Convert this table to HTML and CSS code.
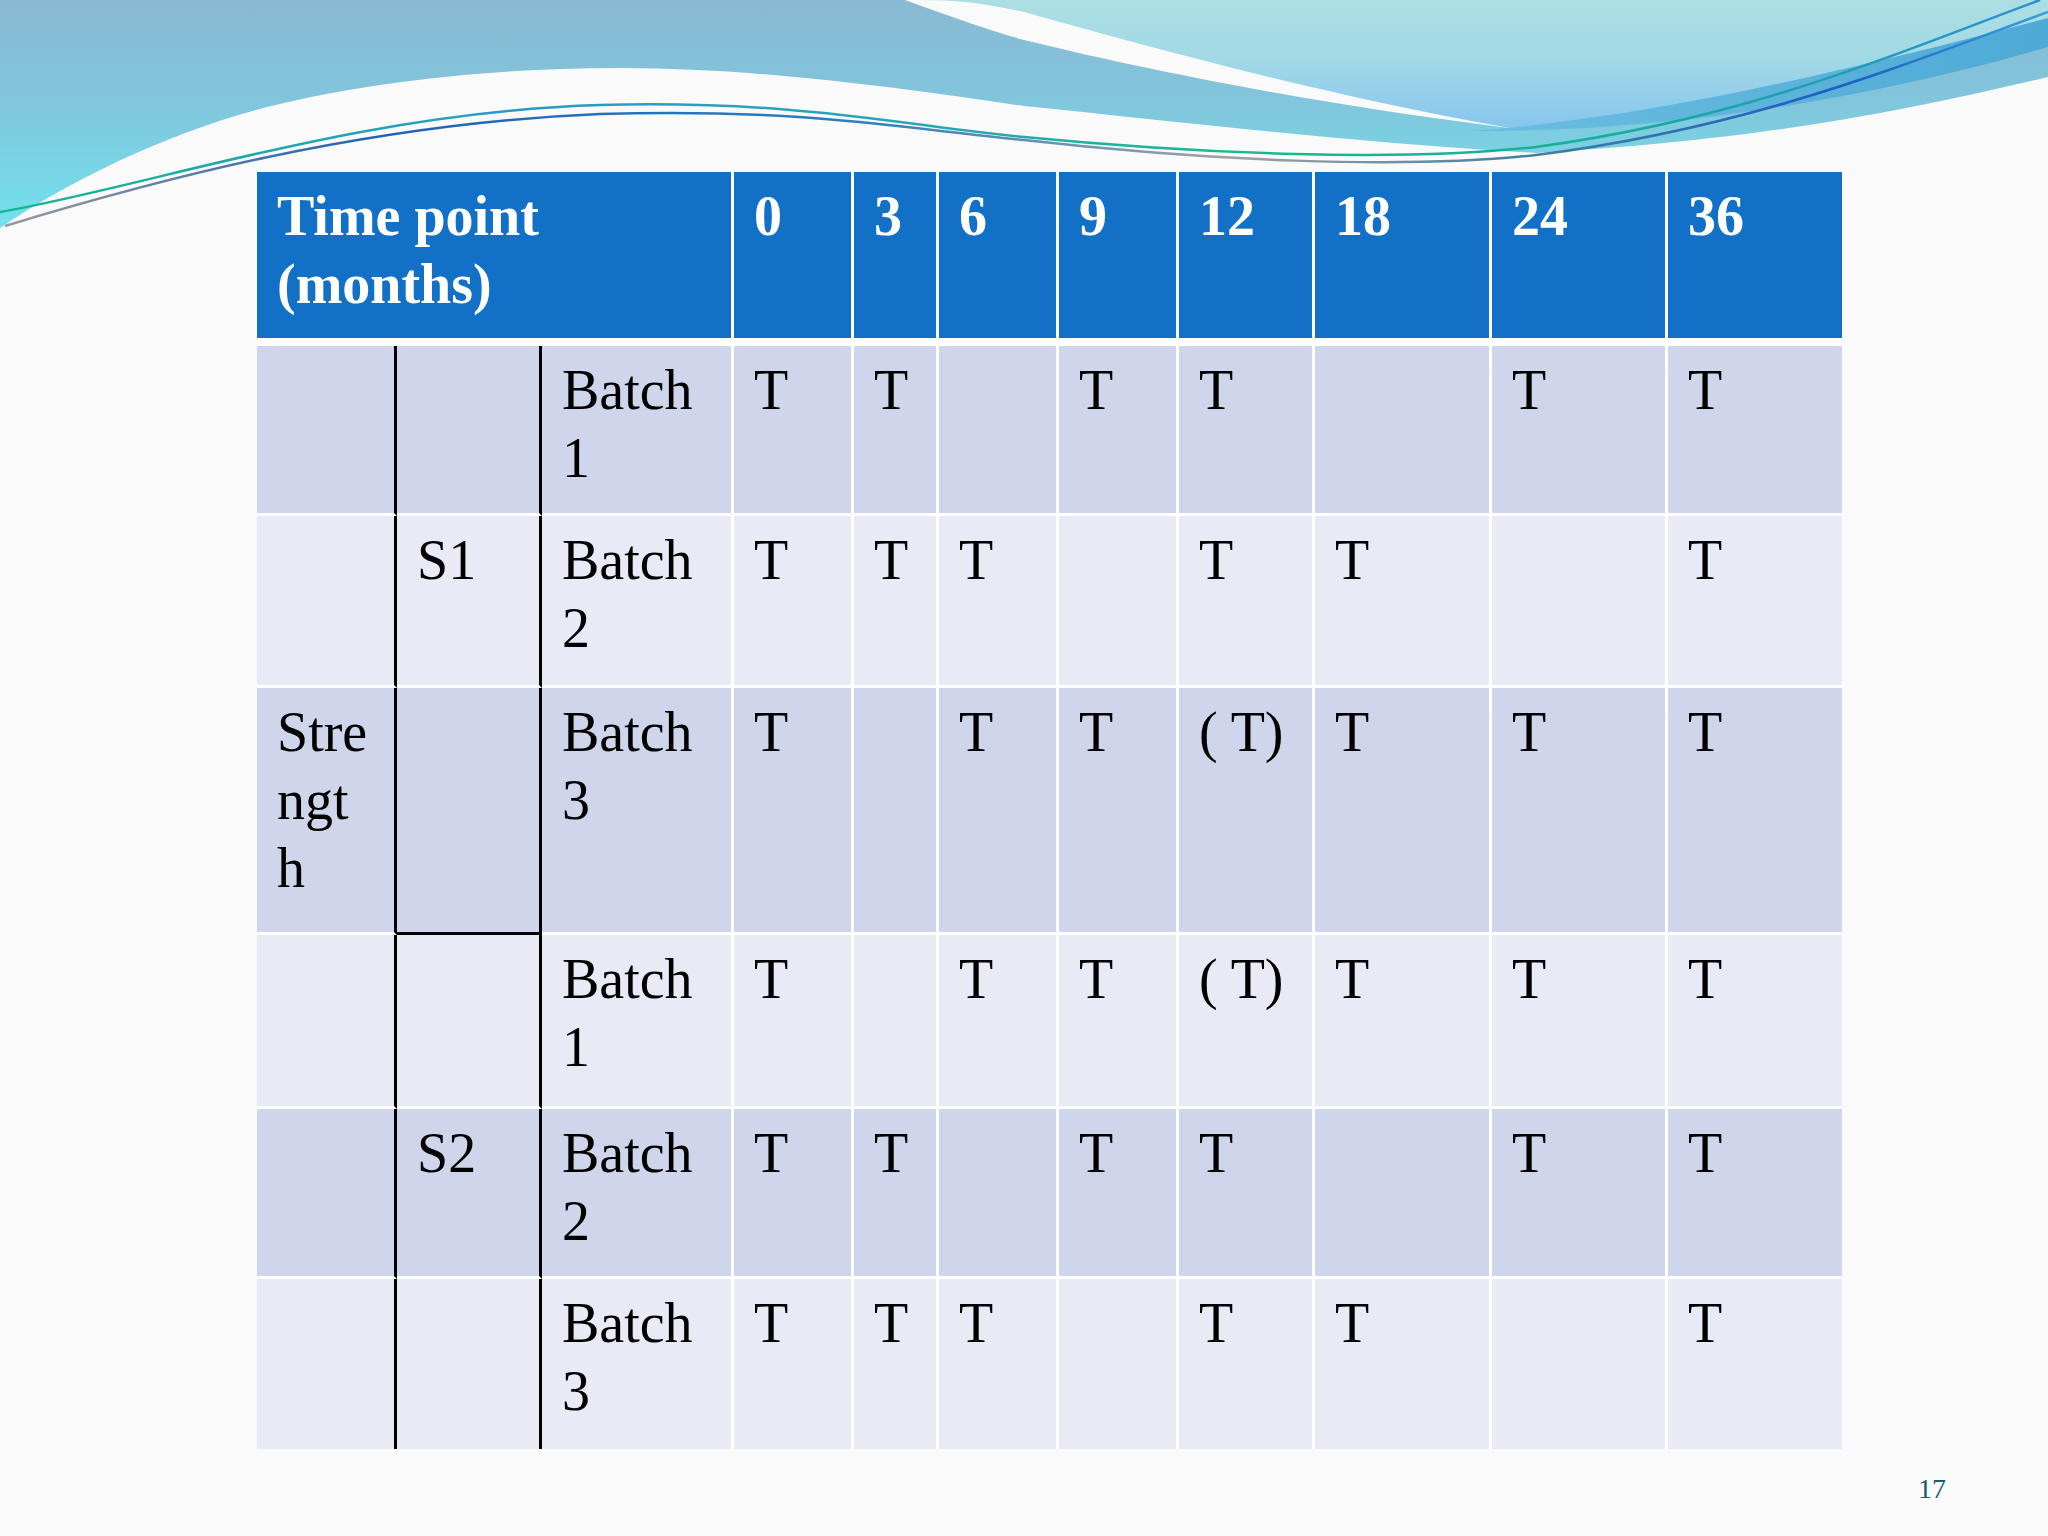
FILE: index.html
```html
<!DOCTYPE html>
<html lang="en">
<head>
<meta charset="utf-8">
<title>Stability time points</title>
<link rel="stylesheet" href="styles.css">
</head>
<body>
<div class="slide">
  <svg class="wave" width="2048" height="240" viewBox="0 0 2048 240" xmlns="http://www.w3.org/2000/svg" aria-hidden="true">
    <defs>
      <linearGradient id="gA" gradientUnits="userSpaceOnUse" x1="0" y1="0" x2="0" y2="230">
        <stop offset="0" stop-color="#89b9d3"/>
        <stop offset="0.45" stop-color="#81c6dc"/>
        <stop offset="1" stop-color="#72e2ed"/>
      </linearGradient>
      <linearGradient id="gB" gradientUnits="userSpaceOnUse" x1="0" y1="0" x2="0" y2="132">
        <stop offset="0" stop-color="#abdfe3"/>
        <stop offset="0.45" stop-color="#a2d9e6"/>
        <stop offset="1" stop-color="#86c4ee"/>
      </linearGradient>
      <linearGradient id="gD" gradientUnits="userSpaceOnUse" x1="1480" y1="0" x2="2048" y2="0">
        <stop offset="0" stop-color="#6cbde0"/>
        <stop offset="1" stop-color="#4eaad6"/>
      </linearGradient>
      <linearGradient id="gL1" gradientUnits="userSpaceOnUse" x1="0" y1="0" x2="2048" y2="0">
        <stop offset="0" stop-color="#12b792"/>
        <stop offset="0.25" stop-color="#2a9ac6"/>
        <stop offset="0.45" stop-color="#2aa4b8"/>
        <stop offset="0.6" stop-color="#14bc8c"/>
        <stop offset="0.78" stop-color="#18ad98"/>
        <stop offset="1" stop-color="#2c8fd0"/>
      </linearGradient>
      <linearGradient id="gL2" gradientUnits="userSpaceOnUse" x1="0" y1="0" x2="2048" y2="0">
        <stop offset="0" stop-color="#9a9a9a"/>
        <stop offset="0.18" stop-color="#1f62b6"/>
        <stop offset="0.42" stop-color="#2a80c0"/>
        <stop offset="0.6" stop-color="#a2a2a2"/>
        <stop offset="0.76" stop-color="#3c7ca4"/>
        <stop offset="0.9" stop-color="#1d5cc2"/>
        <stop offset="1" stop-color="#3aa0da"/>
      </linearGradient>
    </defs>
    <path fill="url(#gA)" d="M0,0 L905,0 C960,20 995,32 1024,40 C1130,66 1310,104 1510,128 C1700,110 1900,60 2048,18 L2048,77 C1900,112 1760,140 1536,153 C1350,142 1200,124 1024,106 C900,88 760,68 620,68 C480,68 360,84 267,107 C170,132 70,180 0,228 Z"/>
    <path fill="url(#gB)" d="M920,0 L2048,0 L2048,18 C1900,60 1700,110 1510,128 C1320,94 1160,50 1024,12 C985,3 955,0 920,0 Z"/>
    <path fill="url(#gD)" d="M1470,131 C1650,118 1850,70 2048,18 L2048,47 C1850,105 1650,132 1470,131 Z"/>
    <path fill="none" stroke="url(#gL1)" stroke-width="2.5" d="M0,212 C150,186 360,112 600,105 C800,100 900,125 1024,137 C1200,154 1400,162 1536,147 C1750,118 1900,52 2040,0"/>
    <path fill="none" stroke="url(#gL2)" stroke-width="2.5" d="M5,226 C150,182 360,124 600,114 C800,108 900,128 1024,140 C1200,160 1400,170 1536,155 C1750,128 1900,66 2048,12"/>
  </svg>

  <table class="grid">
    <colgroup>
      <col class="w1"><col class="w2"><col class="w3"><col class="w4"><col class="w5"><col class="w6">
      <col class="w7"><col class="w8"><col class="w9"><col class="w10"><col class="w11">
    </colgroup>
    <thead>
      <tr class="h-head">
        <th colspan="3">Time point (months)</th>
        <th>0</th><th>3</th><th>6</th><th>9</th><th>12</th><th>18</th><th>24</th><th>36</th>
      </tr>
    </thead>
    <tbody>
      <tr class="band-a h-170">
        <td class="bk"></td><td class="bk"></td><td>Batch 1</td>
        <td>T</td><td>T</td><td></td><td>T</td><td>T</td><td></td><td>T</td><td>T</td>
      </tr>
      <tr class="band-b h-172">
        <td class="bk"></td><td class="bk">S1</td><td>Batch 2</td>
        <td>T</td><td>T</td><td>T</td><td></td><td>T</td><td>T</td><td></td><td>T</td>
      </tr>
      <tr class="band-a h-247">
        <td class="bk">Stre<br>ngt<br>h</td><td class="bk bk-b"></td><td>Batch 3</td>
        <td>T</td><td></td><td>T</td><td>T</td><td>( T)</td><td>T</td><td>T</td><td>T</td>
      </tr>
      <tr class="band-b h-174">
        <td class="bk"></td><td class="bk"></td><td>Batch 1</td>
        <td>T</td><td></td><td>T</td><td>T</td><td>( T)</td><td>T</td><td>T</td><td>T</td>
      </tr>
      <tr class="band-a h-170">
        <td class="bk"></td><td class="bk">S2</td><td>Batch 2</td>
        <td>T</td><td>T</td><td></td><td>T</td><td>T</td><td></td><td>T</td><td>T</td>
      </tr>
      <tr class="band-b h-170">
        <td class="bk"></td><td class="bk"></td><td>Batch 3</td>
        <td>T</td><td>T</td><td>T</td><td></td><td>T</td><td>T</td><td></td><td>T</td>
      </tr>
    </tbody>
  </table>

  <div class="page-num">17</div>
</div>
</body>
</html>
```

FILE: styles.css
```css
html, body {
  margin: 0;
  padding: 0;
  background: #fafafa;
}

.slide {
  position: relative;
  width: 2048px;
  height: 1536px;
  overflow: hidden;
  background: #fafafa;
  padding-top: 172px;
  box-sizing: border-box;
  font-family: "Liberation Serif", "Times New Roman", serif;
}

.wave {
  position: absolute;
  top: 0;
  left: 0;
  z-index: 0;
}

.grid {
  position: relative;
  z-index: 1;
  margin-left: 257px;
  width: 1585px;
  table-layout: fixed;
  border-collapse: separate;
  border-spacing: 0;
}

.w1 { width: 140px; }
.w2 { width: 145px; }
.w3 { width: 192px; }
.w4 { width: 120px; }
.w5 { width: 85px; }
.w6 { width: 120px; }
.w7 { width: 120px; }
.w8 { width: 136px; }
.w9 { width: 177px; }
.w10 { width: 176px; }
.w11 { width: 174px; }

.grid th,
.grid td {
  padding: 10px 20px 0 20px;
  vertical-align: top;
  text-align: left;
  font-size: 56px;
  line-height: 68px;
  border-right: 3px solid #ffffff;
  border-bottom: 3px solid #ffffff;
  color: #000;
}

.grid th {
  background: #1270c7;
  color: #ffffff;
  font-weight: bold;
  border-bottom-width: 8px;
}

.grid tr > :last-child {
  border-right: 0;
}

.grid tbody tr:last-child td {
  border-bottom: 0;
}

.band-a td { background: #cfd5ea; }
.band-b td { background: #e8ebf5; }

.grid td.bk { border-right-color: #000000; }
.grid td.bk-b { border-bottom-color: #000000; }

.h-head { height: 174px; }
.h-170 { height: 170px; }
.h-172 { height: 172px; }
.h-174 { height: 174px; }
.h-247 { height: 247px; }

.page-num {
  display: flex;
  justify-content: flex-end;
  padding-right: 102px;
  margin-top: 24px;
  font-size: 28px;
  line-height: 32px;
  color: #1d5a70;
}
```
